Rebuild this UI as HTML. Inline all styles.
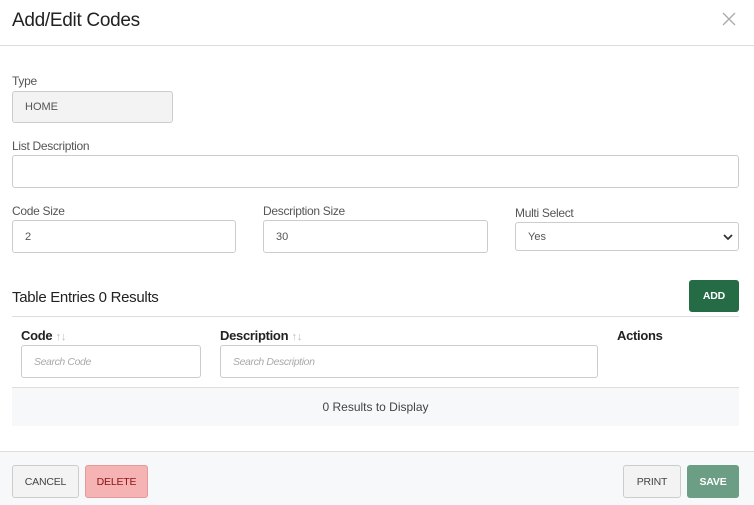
<!DOCTYPE html>
<html><head><style>
*{box-sizing:border-box;margin:0;padding:0}
body{width:754px;height:505px;background:#fff;font-family:"Liberation Sans",sans-serif;color:#333;position:relative;overflow:hidden}
.a{position:absolute}
.lbl{font-size:12px;color:#555;letter-spacing:-0.3px}
.inp{position:absolute;border:1px solid #ccc;border-radius:3px;background:#fff;font-size:11px;color:#555;padding-left:12px;display:flex;align-items:center}
.btn{position:absolute;border-radius:3px;font-size:10.5px;font-weight:bold;display:flex;align-items:center;justify-content:center;letter-spacing:-0.2px}
.ph{color:#aaa;font-style:italic;font-size:10.5px;letter-spacing:-0.4px}
</style></head><body>
<div class="a" style="left:12px;top:10px;font-size:19px;color:#222;letter-spacing:-0.3px">Add/Edit Codes</div>
<svg class="a" style="left:722px;top:12px" width="14" height="14"><path d="M1 1L13 13M13 1L1 13" stroke="#aaa" stroke-width="1.3"/></svg>
<div class="a" style="left:0;top:45px;width:754px;height:1px;background:#ddd"></div>

<div class="a lbl" style="left:12px;top:74px">Type</div>
<div class="inp" style="left:12px;top:91px;width:161px;height:32px;background:#f3f3f3">HOME</div>
<div class="a lbl" style="left:12px;top:139px">List Description</div>
<div class="inp" style="left:12px;top:155px;width:727px;height:33px"></div>
<div class="a lbl" style="left:12px;top:204px">Code Size</div>
<div class="inp" style="left:12px;top:220px;width:224px;height:33px">2</div>
<div class="a lbl" style="left:263px;top:204px">Description Size</div>
<div class="inp" style="left:263px;top:220px;width:225px;height:33px">30</div>
<div class="a lbl" style="left:515px;top:206px">Multi Select</div>
<div class="inp" style="left:515px;top:222px;width:224px;height:29px">Yes
<svg class="a" style="right:5px;top:10px" width="10" height="8"><path d="M1 2L5 6L9 2" stroke="#333" stroke-width="1.8" fill="none"/></svg></div>

<div class="a" style="left:12px;top:289px;font-size:15px;color:#222;letter-spacing:-0.3px">Table Entries 0 Results</div>
<div class="btn" style="left:689px;top:280px;width:50px;height:32px;background:#246b46;color:#fff">ADD</div>
<div class="a" style="left:12px;top:316px;width:727px;height:1px;background:#ddd"></div>
<div class="a" style="left:21px;top:328px;font-size:13px;font-weight:bold;color:#222;letter-spacing:-0.3px">Code <span style="color:#bbb;font-weight:normal;font-size:11px">↑↓</span></div>
<div class="a" style="left:220px;top:328px;font-size:13px;font-weight:bold;color:#222;letter-spacing:-0.3px">Description <span style="color:#bbb;font-weight:normal;font-size:11px">↑↓</span></div>
<div class="a" style="left:617px;top:328px;font-size:13px;font-weight:bold;color:#222;letter-spacing:-0.3px">Actions</div>
<div class="inp ph" style="left:21px;top:345px;width:180px;height:33px">Search Code</div>
<div class="inp ph" style="left:220px;top:345px;width:378px;height:33px">Search Description</div>
<div class="a" style="left:12px;top:387px;width:727px;height:1px;background:#ddd"></div>
<div class="a" style="left:12px;top:388px;width:727px;height:38px;background:#f7f8f9;font-size:12px;color:#444;text-align:center;line-height:38px">0 Results to Display</div>

<div class="a" style="left:0;top:451px;width:754px;height:54px;background:#f7f8f9;border-top:1px solid #ddd"></div>
<div class="btn" style="left:12px;top:465px;width:67px;height:33px;background:#f3f3f3;border:1px solid #ccc;color:#444;font-weight:normal">CANCEL</div>
<div class="btn" style="left:85px;top:465px;width:63px;height:33px;background:#f5b3b3;border:1px solid #e59a9a;color:#8b1414;font-weight:normal">DELETE</div>
<div class="btn" style="left:623px;top:465px;width:58px;height:33px;background:#f3f3f3;border:1px solid #ccc;color:#444;font-weight:normal">PRINT</div>
<div class="btn" style="left:687px;top:465px;width:52px;height:33px;background:#6c9e86;color:#fff">SAVE</div>
</body></html>
